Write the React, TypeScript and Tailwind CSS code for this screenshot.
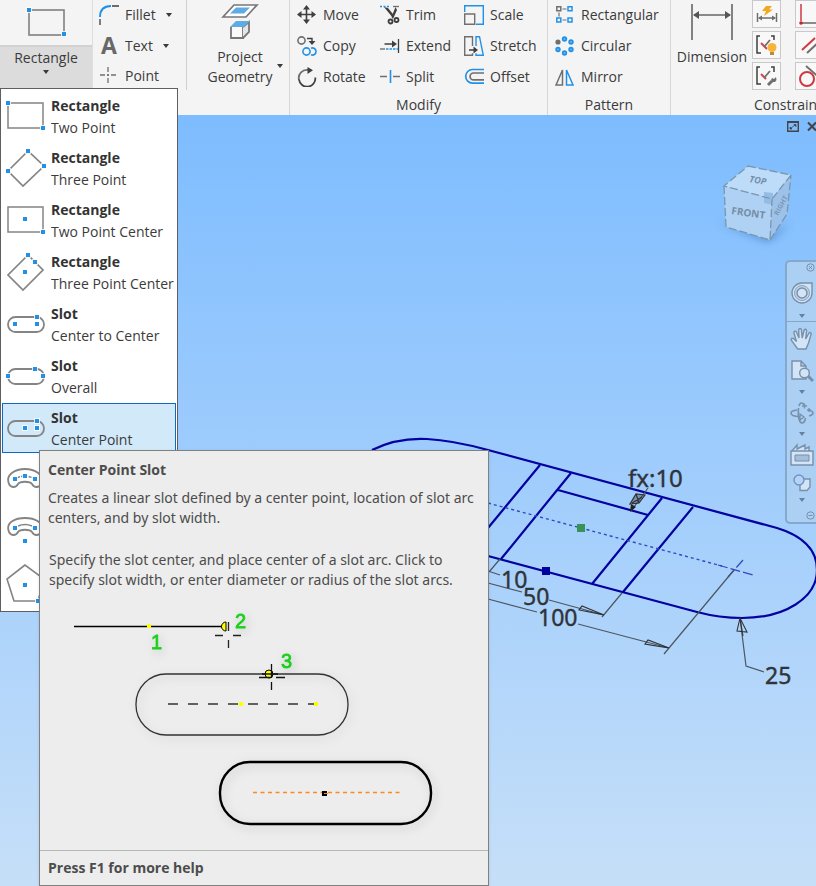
import type { ReactNode } from 'react';
import clsx from 'clsx';

const BLUE = '#2191e8';
const GREY = '#6f6f6f';
const DARK = '#3f3f3f';

interface IconProps {
  children: ReactNode;
  w?: number;
  h?: number;
}

function Icon({ children, w = 20, h = 20 }: IconProps) {
  return (
    <svg width={w} height={h} viewBox={`0 0 ${w} ${h}`} fill="none" className="shrink-0" aria-hidden="true">
      {children}
    </svg>
  );
}

/** Blue grip square, centred on x/y. */
function Grip({ x, y }: { x: number; y: number }) {
  return <rect x={x - 2} y={y - 2} width="4" height="4" fill={BLUE} stroke="#fff" strokeWidth="2" strokeOpacity="0.8" paintOrder="stroke" />;
}

function Caret({ color = '#3a3a3a' }: { color?: string }) {
  return (
    <svg width="6" height="4" viewBox="0 0 6 4" className="shrink-0" aria-hidden="true">
      <path d="M0 0h6L3 4z" fill={color} />
    </svg>
  );
}

const smallIcons: Record<string, ReactNode> = {
  fillet: (
    <>
      <path d="M1 14v6M13 1h7" stroke={DARK} strokeWidth="1.3" />
      <path d="M1 12C1 5 5 1 12 1" stroke={BLUE} strokeWidth="1.8" />
    </>
  ),
  text: (
    <text x="2" y="18" fontFamily="Open Sans" fontSize="23" fontWeight="700" fill="#686868">
      A
    </text>
  ),
  point: <path d="M9 1v5M9 12v5M1 9h5M12 9h5M8 9h2M9 8v2" stroke={GREY} strokeWidth="1.3" />,
  move: (
    <>
      <path d="M9.500 3v13M3 9.500h13" stroke={DARK} strokeWidth="1.6" />
      <path d="M9.500 0l3.500 4.500H6zM9.500 19l3.500-4.500H6zM0 9.500L4.500 6v7zM19 9.500L14.500 6v7z" fill={DARK} />
    </>
  ),
  copy: (
    <>
      <circle cx="4.500" cy="4.500" r="3.600" stroke={GREY} strokeWidth="1.6" />
      <path d="M10 2.500h5v3" stroke={DARK} strokeWidth="1.4" />
      <path d="M11.500 5h7L15 9z" fill={DARK} />
      <circle cx="9.500" cy="15.500" r="3.600" stroke={BLUE} strokeWidth="1.6" />
      <path d="M14 12.200a3.600 3.600 0 1 1 0 6.600" stroke={BLUE} strokeWidth="1.6" />
    </>
  ),
  rotate: (
    <>
      <path d="M11.500 3A8.200 8.200 0 0 0 2 13" stroke={GREY} strokeWidth="1.800" />
      <path d="M2 12.500a8.200 8.200 0 0 0 16.300-2" stroke={DARK} strokeWidth="1.800" />
      <path d="M10.500 0l5.500 3.300-5.500 3.700z" fill={DARK} />
    </>
  ),
  trim: (
    <>
      <path d="M0 1.500h9" stroke={BLUE} strokeWidth="1.300" strokeDasharray="2 1.500" />
      <path d="M13 1.500h6" stroke={GREY} strokeWidth="1.300" />
      <path d="M4 2l9 11 1.500-2L8 3zM15.500 2l-4 10 1.500 2 4-9z" fill={DARK} />
      <circle cx="10.500" cy="16.500" r="2" stroke={DARK} strokeWidth="1.800" />
      <circle cx="16.500" cy="15" r="2" stroke={DARK} strokeWidth="1.800" />
    </>
  ),
  extend: (
    <>
      <path d="M4.500 8h9M18.500 3v14" stroke={DARK} strokeWidth="1.300" />
      <path d="M12 4.500L17 8l-5 3.500z" fill={DARK} />
      <path d="M0 13h5" stroke={GREY} strokeWidth="1.400" />
      <path d="M6 13h12" stroke={BLUE} strokeWidth="1.500" strokeDasharray="2.500 1" />
    </>
  ),
  split: (
    <>
      <path d="M0 9.500h7M13 9.500h7" stroke={GREY} strokeWidth="1.500" />
      <path d="M10.500 3v13" stroke={BLUE} strokeWidth="1.600" />
    </>
  ),
  scale: (
    <>
      <path d="M.7 7V.7h18.600v18.600H12" stroke={BLUE} strokeWidth="1.400" />
      <path d="M.7 9h10v10.300H.7z" stroke={GREY} strokeWidth="1.400" />
    </>
  ),
  stretch: (
    <>
      <path d="M8.500 10V.7H.7v18.600h7.800v-2" stroke={GREY} strokeWidth="1.400" />
      <path d="M12 10V.7h3.500l3.800 18.600H12v-2" stroke={BLUE} strokeWidth="1.400" />
      <path d="M5 14h5" stroke={DARK} strokeWidth="1.500" />
      <path d="M9.500 10.500l4.500 3.500-4.500 3.500z" fill={DARK} />
    </>
  ),
  offset: (
    <>
      <path d="M20 2.500H8.500a6.800 6.800 0 0 0 0 13.600H20" stroke={BLUE} strokeWidth="1.700" />
      <path d="M20 6H9.500a3.400 3.400 0 0 0 0 6.800H20" stroke={GREY} strokeWidth="1.700" />
    </>
  ),
  rectangular: (
    <>
      <path d="M1.800 1.800h4v4h-4z" stroke={GREY} strokeWidth="1.500" />
      <path d="M13 1.800h4v4h-4zM1.800 13h4v4h-4zM13 13h4v4h-4z" stroke={BLUE} strokeWidth="1.500" />
      <path d="M7.500 4h4M7.500 15h4M4 7.500v4" stroke={GREY} strokeWidth="1.200" />
    </>
  ),
  circular: (
    <>
      <circle cx="3" cy="6" r="2.600" fill={GREY} />
      <g fill={BLUE}>
        <circle cx="9.500" cy="3" r="2.700" />
        <circle cx="16" cy="6" r="2.700" />
        <circle cx="16" cy="13.500" r="2.700" />
        <circle cx="9.500" cy="17" r="2.700" />
        <circle cx="3" cy="13.500" r="2.700" />
      </g>
      <g fill="#6bb5ef">
        <circle cx="9.500" cy="3" r="1" />
        <circle cx="16" cy="6" r="1" />
        <circle cx="16" cy="13.500" r="1" />
        <circle cx="9.500" cy="17" r="1" />
        <circle cx="3" cy="13.500" r="1" />
      </g>
    </>
  ),
  mirror: (
    <>
      <path d="M7.500 3v15H1z" stroke={GREY} strokeWidth="1.500" />
      <path d="M11.500 3v15H18z" stroke={BLUE} strokeWidth="1.500" />
    </>
  ),
};

function RibbonCommand({ icon, label, caret }: { icon: string; label: string; caret?: boolean }) {
  return (
    <button type="button" className="flex h-7 items-center gap-1.5 whitespace-nowrap text-left hover:bg-gray-200">
      <Icon>{smallIcons[icon]}</Icon>
      <span>{label}</span>
      {caret && (
        <span className="pl-1">
          <Caret />
        </span>
      )}
    </button>
  );
}

function GroupLabel({ children }: { children: ReactNode }) {
  return <div className="pt-1 text-center leading-5">{children}</div>;
}

const modifyCommands = [
  ['move', 'Move'],
  ['trim', 'Trim'],
  ['scale', 'Scale'],
  ['copy', 'Copy'],
  ['extend', 'Extend'],
  ['stretch', 'Stretch'],
  ['rotate', 'Rotate'],
  ['split', 'Split'],
  ['offset', 'Offset'],
];

const constraintIcons: { label: string; art: ReactNode }[] = [
  {
    label: 'Automatic dimensions',
    art: (
      <>
        <path d="M4.500 12v9M23.500 12v9M6 17h16" stroke={GREY} strokeWidth="1.500" />
        <path d="M5 17l4-2.500v5zM23 17l-4-2.500v5z" fill={GREY} />
        <path d="M13 5h6l-3 3.500h4L11 15l2-5h-4z" fill="#f5a71c" />
      </>
    ),
  },
  {
    label: 'Coincident',
    art: (
      <>
        <path d="M5 22h23" stroke={GREY} strokeWidth="1.600" />
        <path d="M5 3v17" stroke="#cf3a42" strokeWidth="1.500" />
        <circle cx="5" cy="22" r="1.800" fill="#c8202a" />
      </>
    ),
  },
  {
    label: 'Show constraints',
    art: (
      <>
        <path d="M7 4H4v17h4M18 4h3v4" stroke={DARK} strokeWidth="1.500" />
        <path d="M8 11l6 6" stroke="#d6454d" strokeWidth="2" />
        <path d="M11 15l6-7" stroke={GREY} strokeWidth="1.800" />
        <circle cx="19" cy="15.500" r="4.500" fill="#f8b33a" />
        <path d="M17 20h4v3h-4z" fill="#b98a43" />
      </>
    ),
  },
  {
    label: 'Parallel',
    art: (
      <>
        <path d="M6 18L19 6" stroke="#cf3a42" strokeWidth="2" />
        <path d="M11 21L25 8" stroke={GREY} strokeWidth="2" />
      </>
    ),
  },
  {
    label: 'Constraint settings',
    art: (
      <>
        <path d="M7 4H4v17h4M18 4h3v5" stroke={DARK} strokeWidth="1.500" />
        <path d="M8 11l5 5" stroke="#d6454d" strokeWidth="2" />
        <path d="M11 15l6-7" stroke={GREY} strokeWidth="1.800" />
        <path d="M15 22l4-4" stroke={GREY} strokeWidth="3" />
        <path d="M23 14l-2 2-2-1-1 2 1 2h3l1.500-2z" fill={GREY} />
      </>
    ),
  },
  {
    label: 'Tangent',
    art: (
      <>
        <circle cx="11" cy="16" r="7" stroke="#cf3a42" strokeWidth="2" />
        <path d="M10 3l16 14" stroke={GREY} strokeWidth="1.800" />
      </>
    ),
  },
];

interface ShapeItem {
  title: string;
  detail: string;
  art: ReactNode;
}

const slotArt = <rect x="2" y="17" width="36" height="15" rx="7.500" stroke="#848484" strokeWidth="1.800" />;

const shapeItems: ShapeItem[] = [
  {
    title: 'Rectangle',
    detail: 'Two Point',
    art: (
      <>
        <rect x="2" y="11" width="35" height="25" stroke="#848484" strokeWidth="1.500" />
        <Grip x={2} y={11} />
        <Grip x={37} y={36} />
      </>
    ),
  },
  {
    title: 'Rectangle',
    detail: 'Three Point',
    art: (
      <>
        <path d="M22 7L2 27l15 15 21-20z" stroke="#848484" strokeWidth="1.700" />
        <Grip x={22} y={7} />
        <Grip x={2} y={27} />
        <Grip x={38} y={22} />
      </>
    ),
  },
  {
    title: 'Rectangle',
    detail: 'Two Point Center',
    art: (
      <>
        <rect x="2" y="11" width="35" height="25" stroke="#848484" strokeWidth="1.500" />
        <Grip x={19} y={23} />
        <Grip x={37} y={36} />
      </>
    ),
  },
  {
    title: 'Rectangle',
    detail: 'Three Point Center',
    art: (
      <>
        <path d="M22 7L2 27l15 15 20-20z" stroke="#848484" strokeWidth="1.700" />
        <Grip x={22} y={7} />
        <Grip x={29} y={14} />
        <Grip x={19} y={24} />
      </>
    ),
  },
  {
    title: 'Slot',
    detail: 'Center to Center',
    art: (
      <>
        {slotArt}
        <Grip x={9} y={24} />
        <Grip x={31} y={24} />
        <Grip x={31} y={17} />
      </>
    ),
  },
  {
    title: 'Slot',
    detail: 'Overall',
    art: (
      <>
        {slotArt}
        <Grip x={2} y={24} />
        <Grip x={37} y={24} />
        <Grip x={29} y={17} />
      </>
    ),
  },
  {
    title: 'Slot',
    detail: 'Center Point',
    art: (
      <>
        {slotArt}
        <Grip x={19} y={24} />
        <Grip x={31} y={24} />
        <Grip x={31} y={17} />
      </>
    ),
  },
  {
    title: 'Slot',
    detail: '',
    art: (
      <>
        <path d="M3 28C-1 18 10 13 19 13s20 5 16 15c-2 4-7 4-9 0-2-3-12-3-14 0-2 4-7 4-9 0z" stroke="#848484" strokeWidth="1.800" />
        <path d="M11 22q8-4 16 0" stroke="#848484" strokeWidth="1.500" strokeDasharray="3 1" />
        <Grip x={9} y={23} />
        <Grip x={19} y={20} />
        <Grip x={29} y={23} />
      </>
    ),
  },
  {
    title: 'Slot',
    detail: '',
    art: (
      <>
        <path d="M3 24C-1 14 10 10 19 10s20 4 16 14c-2 4-7 4-9 0-2-3-12-3-14 0-2 4-7 4-9 0z" stroke="#848484" strokeWidth="1.800" />
        <path d="M12 18q7-3 14 0" stroke="#848484" strokeWidth="1.500" />
        <Grip x={9} y={20} />
        <Grip x={29} y={20} />
        <Grip x={19} y={33} />
      </>
    ),
  },
  {
    title: 'Polygon',
    detail: '',
    art: (
      <>
        <path d="M19 5L1 19l7 22h24l6-22z" stroke="#848484" strokeWidth="1.600" />
        <Grip x={19} y={25} />
        <Grip x={32} y={41} />
      </>
    ),
  },
];

function ShapeMenu() {
  return (
    <div className="absolute left-0 top-[88px] z-10 w-[178px] border border-[#5f5f63] bg-white pt-0.5">
      {shapeItems.map((item, i) => {
        const active = item.detail === 'Center Point';
        return (
          <button
            key={i}
            type="button"
            aria-label={`${item.title} ${item.detail}`.trim()}
            className={clsx(
              'mx-px mb-0.5 flex h-[50px] w-[174px] items-center gap-1 border pl-[3px] text-left leading-[22px]',
              active ? 'border-[#1169c4] bg-[#d1e9f9]' : 'border-transparent',
            )}
          >
            <Icon w={41} h={48}>
              {item.art}
            </Icon>
            {item.detail && (
              <span className="whitespace-nowrap pt-0.5">
                <span className="block font-bold text-[#333]">{item.title}</span>
                <span className="block">{item.detail}</span>
              </span>
            )}
          </button>
        );
      })}
    </div>
  );
}

function SlotTooltip() {
  return (
    <div
      role="tooltip"
      className="absolute left-[39px] top-[450px] z-20 w-[450px] border border-[#808080] bg-[#ededed] leading-5 text-[#4c4c4c] shadow-sm"
    >
      <h2 className="px-2 pt-[9px] font-bold">Center Point Slot</h2>
      <p className="whitespace-nowrap pl-2 pt-2 font-['Noto_Sans',sans-serif]">
        Creates a linear slot defined by a center point, location of slot arc
        <br />
        centers, and by slot width.
      </p>
      <p className="whitespace-nowrap pl-[9px] pt-[22px] font-['Noto_Sans',sans-serif]">
        Specify the slot center, and place center of a slot arc. Click to
        <br />
        specify slot width, or enter diameter or radius of the slot arcs.
      </p>
      <svg viewBox="40 590 448 260" className="block w-full" fill="none" aria-hidden="true">
        <defs>
          <filter id="soft" x="-20%" y="-30%" width="140%" height="160%">
            <feDropShadow dx="2" dy="3" stdDeviation="5" floodColor="#000" floodOpacity="0.18" />
          </filter>
        </defs>
        <g fontFamily="Liberation Sans" fontSize="20" fill="#1ccf1c" stroke="#1ccf1c" strokeWidth="0.800" filter="url(#soft)">
          <text x="151" y="649">1</text>
          <text x="235" y="628">2</text>
          <text x="281" y="668">3</text>
        </g>
        <path d="M74 626.500h152" stroke="#000" strokeWidth="1.500" />
        <rect x="147" y="624" width="4" height="4" fill="#ff0" />
        <path d="M226 622a4.500 4.500 0 0 0 0 9z" fill="#ff0" stroke="#000" />
        <path d="M228.500 622v9M215 635.500h8M233 635.500h8M228.500 640v8" stroke="#222" strokeWidth="1.300" />
        <rect x="136" y="674" width="212" height="61" rx="30" stroke="#333" strokeWidth="1.300" filter="url(#soft)" />
        <path d="M168 704h150" stroke="#333" strokeWidth="1.500" strokeDasharray="10 10" />
        <rect x="239" y="702" width="4" height="4" fill="#ff0" />
        <rect x="314" y="702" width="4" height="4" fill="#ff0" />
        <circle cx="269" cy="674" r="4" fill="#ff0" stroke="#000" />
        <path d="M271.500 664v14M259 677.500h12M276 677.500h9M271.500 682v8M262 674h16" stroke="#111" strokeWidth="1.300" />
        <rect x="220" y="762" width="211" height="62" rx="30" stroke="#000" strokeWidth="2.400" filter="url(#soft)" />
        <path d="M253 792.500h148" stroke="#ff8a1c" strokeWidth="1.400" strokeDasharray="4 3.500" />
        <rect x="322" y="791" width="5" height="5" fill="#000" />
        <path d="M324 793.500h4" stroke="#ff8a1c" />
      </svg>
      <div className="border-t border-[#b5b9b5] px-2 pb-[7px] pt-[7px] font-bold">Press F1 for more help</div>
    </div>
  );
}

function Ribbon() {
  return (
    <header className="flex shrink-0 overflow-hidden bg-[#f4f4f4]">
      <div className="flex shrink-0">
        <button type="button" className="flex h-[88px] w-[93px] flex-col items-center border-r border-[#dedede]">
          <span className="flex h-[45px] items-center">
            <Icon w={42} h={32}>
              <rect x="4" y="3" width="35" height="25" stroke="#808080" strokeWidth="1.600" />
              <Grip x={4} y={3} />
              <Grip x={39} y={27} />
            </Icon>
          </span>
          <span className="flex w-full flex-1 flex-col items-center border-t-2 border-[#d2d2d2] bg-[#dcdcdc]">
            <span className="pb-px leading-[22px]">Rectangle</span>
            <Caret />
          </span>
        </button>
        <div className="flex h-[90px] w-[94px] flex-col gap-[3px] border-r border-[#cfcfcf] pl-[6px] pt-px">
          <RibbonCommand icon="fillet" label="Fillet" caret />
          <RibbonCommand icon="text" label="Text" caret />
          <RibbonCommand icon="point" label="Point" />
        </div>
        <div className="w-[103px] border-r border-[#d6d6d6]">
          <button type="button" className="flex w-full flex-col items-center pl-1 pt-1 leading-5">
            <Icon w={38} h={36}>
              <path d="M13 1h23L25 13H2z" stroke="#777" strokeWidth="1.700" fill="#fff" />
              <path d="M15 3.500h14l-6 6H9z" fill="#5fabe3" />
              <path d="M10 23v11h12V23" stroke="#777" strokeWidth="1.800" fill="#fafafa" />
              <path d="M22 34l6-6V18l-6 5" stroke="#777" strokeWidth="1.800" fill="#e6e6e6" />
              <path d="M15 17h14l-6 6H9z" fill="#5fabe3" />
            </Icon>
            <span className="pt-[7px]">Project</span>
            <span className="relative">
              Geometry
              <span className="absolute left-full top-1/4 -mt-2 pl-1">
                <Caret />
              </span>
            </span>
          </button>
        </div>
      </div>

      <div className="w-[258px] shrink-0 border-r border-[#d6d6d6] pt-px">
        <div className="grid grid-cols-[83px_84px_auto] gap-y-[3px] pl-[7px]">
          {modifyCommands.map(([icon, label]) => (
            <RibbonCommand key={icon} icon={icon} label={label} />
          ))}
        </div>
        <GroupLabel>Modify</GroupLabel>
      </div>

      <div className="w-[123px] shrink-0 border-r border-[#d6d6d6] pt-px">
        <div className="flex flex-col gap-[3px] pl-[7px]">
          <RibbonCommand icon="rectangular" label="Rectangular" />
          <RibbonCommand icon="circular" label="Circular" />
          <RibbonCommand icon="mirror" label="Mirror" />
        </div>
        <GroupLabel>Pattern</GroupLabel>
      </div>

      <div className="shrink-0 pl-[5px]">
        <div className="flex gap-1">
          <button type="button" className="flex w-[72px] flex-col items-center pt-1 leading-5">
            <Icon w={42} h={36}>
              <path d="M1 0v36M41 0v36" stroke="#666" strokeWidth="1.600" />
              <path d="M3 11h36" stroke="#666" strokeWidth="1.500" />
              <path d="M2 11l6-4v8zM40 11l-6-4v8z" fill="#555" />
            </Icon>
            <span className="pt-[7px]">Dimension</span>
          </button>
          <div className="grid grid-cols-[29px_29px] gap-x-[14px] gap-y-[3px]">
            {constraintIcons.map((c) => (
              <button
                key={c.label}
                type="button"
                aria-label={c.label}
                className="flex h-7 items-center justify-center overflow-hidden border border-[#c9c9c9] bg-[#f8f8f8]"
              >
                <Icon w={28} h={26}>
                  {c.art}
                </Icon>
              </button>
            ))}
          </div>
        </div>
        <div className="pl-[78px] pt-[5px] leading-5">Constrain</div>
      </div>
    </header>
  );
}

/** Isometric sketch with its dimensions. */
function Sketch() {
  return (
    <svg viewBox="0 115 816 771" preserveAspectRatio="xMinYMin meet" className="absolute inset-0 h-full w-full" fill="none" aria-hidden="true">
      <g stroke="#0202a0" strokeWidth="2.200">
        <path d="M372 450C390 441 408 438 427 439C448 440 466 444 488 450L777 528C803 536 817 550 817 570C817 598 785 618 742 618C725 618 712 616 697 612L488 556" />
        <path d="M540 465L488 528M571 473L501 559M662 498L592 584M693 507L623 592M558 490L648 515" />
      </g>
      <path d="M488 503L722 566" stroke="#3347c4" strokeWidth="1.400" strokeDasharray="3 3" />
      <path d="M718 565L753 575M743 560L728 577" stroke="#3347c4" strokeWidth="1.200" strokeDasharray="10 3" />
      <rect x="577" y="524" width="8" height="8" fill="#379456" />
      <rect x="542" y="567" width="8" height="8" fill="#0202a0" />
      <g stroke="#4d5660" strokeWidth="1.200">
        <path d="M500 559L489 572M488 571L500 575M488 583L522 592M549 600L604 615M622 593L602 617M488 599L537 612M578 624L669 648M734 570L664 654" />
        <path d="M740 618L746 666L764 672M648 488L631 511" />
      </g>
      <g stroke="#2e3236" strokeWidth="1.100">
        <path d="M604 615L582 606L579 610zM604 615L585 611" />
        <path d="M669 648L648 640L645 644zM669 648L650 645" />
        <path d="M740 618L737 631L747 632zM740 618l3 18" />
        <path d="M645 495l-9-1-6 10 9-1zM636 494l3 9M642 497l-10 6" fill="#4d5660" fillOpacity="0.500" strokeWidth="1.200" />
      </g>
      <path d="M630 512l1-8 5 3z" fill="#222" />
      <g fontFamily="Noto Sans" fontSize="23" fill="#30343a" stroke="#30343a" strokeWidth="0.400">
        <text x="628" y="487" fontSize="24">fx:10</text>
        <text x="501" y="588">10</text>
        <text x="523" y="605">50</text>
        <text x="538" y="626">100</text>
        <text x="765" y="684">25</text>
      </g>
    </svg>
  );
}

function ViewCube() {
  return (
    <button type="button" aria-label="View cube" className="absolute right-5 top-10">
      <svg width="86" height="96" viewBox="710 155 86 96" fill="none" aria-hidden="true">
        <defs>
          <filter id="blur" x="-30%" y="-60%" width="160%" height="220%">
            <feGaussianBlur stdDeviation="4" />
          </filter>
        </defs>
        <path d="M718 222l50 20 22-18-20 8z" fill="#3f7dbd" opacity="0.700" filter="url(#blur)" />
        <path d="M748 166l43 9-19 24-48-13z" fill="#bcdcfa" />
        <path d="M724 186l48 13-2 41-44-13z" fill="#afd1f3" />
        <path d="M791 175l-4 39-17 26 2-41z" fill="#9dc2e9" />
        <path d="M764 192l9 1v12l-9-2z" fill="#94bde6" />
        <path d="M748 166l43 9-19 24-48-13zM724 186l2 41 44 13 2-41M770 240l17-26 4-39" stroke="#7d95ad" strokeWidth="1.300" strokeDasharray="8 3" />
        <g fontFamily="Open Sans" fontWeight="700" fill="#748da8">
          <text x="731" y="214" fontSize="10" transform="rotate(8 731 214)">FRONT</text>
          <text x="749" y="182" fontSize="9" fontStyle="italic" transform="rotate(10 749 182)">TOP</text>
          <text x="778" y="216" fontSize="7" fillOpacity="0.800" transform="rotate(-62 778 216)">RIGHT</text>
        </g>
      </svg>
    </button>
  );
}

const navGlyph = { stroke: '#7790ab', strokeWidth: 1.4, fill: '#d2e4f5' };

function NavCaret() {
  return (
    <div className="flex h-2.5 items-center justify-center">
      <Caret color="#65819f" />
    </div>
  );
}

function NavButton({ label, children }: { label: string; children: ReactNode }) {
  return (
    <button type="button" aria-label={label} className="flex h-8 w-full items-center justify-center">
      <Icon w={24} h={24}>
        {children}
      </Icon>
    </button>
  );
}

function NavigationBar() {
  return (
    <nav className="absolute right-0 top-[145px] w-[31px] rounded-l-[5px] border-2 border-r-0 border-[#85a9cd] bg-[#acd0f4]">
      <button type="button" aria-label="Close navigation bar" className="flex w-full justify-end pr-px pt-px">
        <Icon w={9} h={9}>
          <circle cx="4.500" cy="4.500" r="3.700" stroke="#7790ab" />
          <path d="M3 3l3 3M6 3L3 6" stroke="#7790ab" />
        </Icon>
      </button>
      <div className="pb-0.5 pt-[5px]">
        <NavButton label="Steering wheel">
          <path d="M2 12A10 10 0 0 1 12 2h10v10A10 10 0 0 1 2 12z" {...navGlyph} />
          <circle cx="12" cy="12" r="7.500" stroke="#8ba3bc" fill="#bcd3ea" />
          <circle cx="12" cy="12" r="5" {...navGlyph} />
        </NavButton>
      </div>
      <NavCaret />
      <hr className="mb-px border-[#86a6c8]" />
      <NavButton label="Pan">
        <path d="M7 21L1.500 13.500c-1-2 1-3 2.500-1.500l2.500 2.500L4 6c-.5-2 2-2.500 2.700-.6L9 11 8.700 3c0-2 2.500-2 2.700 0l.8 8L14 3.500c.5-2 2.800-1.400 2.500.5L15.700 12l3-5.500c1-1.700 3-.7 2.300 1L18.500 16 16 22H8z" {...navGlyph} />
      </NavButton>
      <NavButton label="Zoom">
        <path d="M2 2h9l5 5v13H2zM11 2v5h5" {...navGlyph} />
        <path d="M18 17l5 5" stroke="#7790ab" strokeWidth="3" />
        <circle cx="14.500" cy="14" r="4.800" {...navGlyph} />
      </NavButton>
      <NavCaret />
      <NavButton label="Orbit">
        <path d="M7 9C3 9.500 1 10.700 1 12c0 2 4 3.500 9 3.700M18 9c3 .6 5 1.700 5 3 0 1.300-1.500 2.300-4 3" stroke="#7790ab" strokeWidth="1.600" />
        <path d="M9 5c.8-4 4-4 5.500-.5M15.500 17c-1 6-5 7-6.500 1-1-4-1-7-.500-11" stroke="#7790ab" strokeWidth="1.600" />
        <path d="M12 5h5M14.500 2.500v5M17 9h4M19 7v4M10 13l4 3-4 3z" stroke="#7790ab" strokeWidth="1.300" />
      </NavButton>
      <NavCaret />
      <NavButton label="Look at">
        <path d="M2 8l5-6v4l8-4v4l4-2v4" {...navGlyph} />
        <path d="M1 8h22v14H1z" {...navGlyph} />
        <path d="M5 12h14v6H5z" stroke="#7790ab" fill="#a3bfdc" />
      </NavButton>
      <button type="button" aria-label="Visual style" className="flex h-6 w-full items-center justify-center">
        <Icon w={18} h={18}>
          <path d="M7 8l3-3h7v8l-3 3.500H7z" {...navGlyph} />
          <circle cx="6" cy="6" r="5" stroke="#6f93c4" strokeWidth="1.400" fill="#b6d3f5" />
        </Icon>
      </button>
      <NavCaret />
      <button type="button" aria-label="Navigation bar options" className="flex w-full justify-end pb-0.5 pr-px pt-1.5">
        <Icon w={9} h={9}>
          <circle cx="4.500" cy="4.500" r="3.700" stroke="#7790ab" />
          <path d="M2.500 4.500h4" stroke="#7790ab" />
        </Icon>
      </button>
    </nav>
  );
}

export default function App() {
  return (
    <div className="relative flex h-screen flex-col overflow-hidden font-['Open_Sans','Noto_Sans',sans-serif] text-sm text-[#3b3b3b]">
      <Ribbon />
      <main className="relative flex-1 overflow-hidden bg-linear-to-b from-[#7dbcff] to-[#c6dff8]">
        <Sketch />
        <div className="absolute right-0 top-1.5 flex gap-2">
          <button type="button" aria-label="Restore window">
            <Icon w={12} h={11}>
              <path d="M.7 1h10.600v9.300H.7z" stroke="#444" strokeWidth="1.400" />
              <path d="M0 1h12" stroke="#444" strokeWidth="2" />
              <path d="M7 3.500h2v2zM3 6v2h2zM4 7l4-3" fill="#444" stroke="#444" strokeWidth="0.800" />
            </Icon>
          </button>
          <button type="button" aria-label="Close window">
            <Icon w={9} h={11}>
              <path d="M1 1.500l8 8M9 1.500l-8 8" stroke="#444" strokeWidth="2" />
            </Icon>
          </button>
        </div>
        <ViewCube />
        <NavigationBar />
      </main>
      <ShapeMenu />
      <SlotTooltip />
    </div>
  );
}
